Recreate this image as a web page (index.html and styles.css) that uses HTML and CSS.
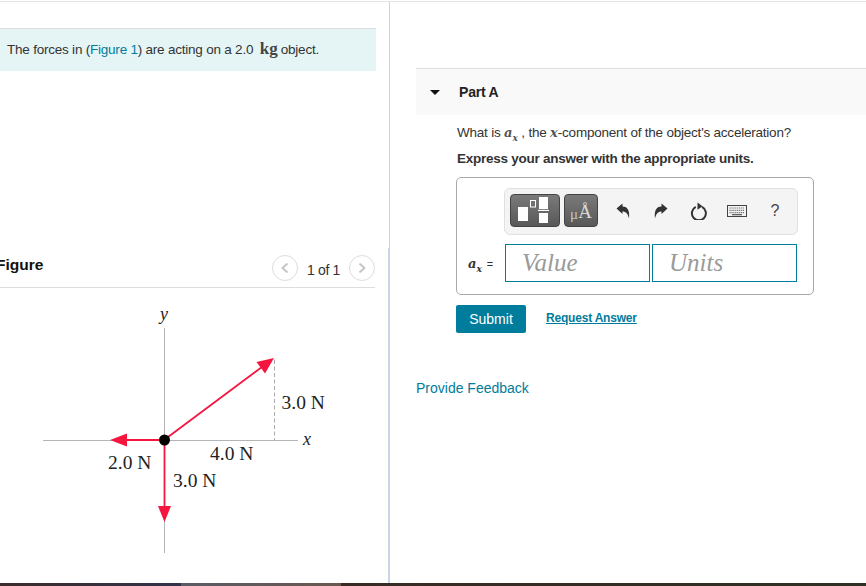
FILE: index.html
```html
<!DOCTYPE html>
<html lang="en">
<head>
  <meta charset="UTF-8" />
  <title>Part A</title>
  <link rel="stylesheet" href="styles.css">
</head>
<body>
  <div class="page">
    <div class="main">
      <div class="left">
        <div class="intro">The forces in (<a href="#">Figure 1</a>) are acting on a 2.0 <span class="unit">kg</span> object.</div>
        <div class="figHead">
          <div class="figTitle">Figure</div>
          <div class="pager">
            <span class="pageBtn">
              <svg width="10" height="12" viewBox="0 0 10 12"><path d="M7.5 1.5 L2.5 6 L7.5 10.5" fill="none" stroke="#c4c4c4" stroke-width="1.8"/></svg>
            </span>
            <span class="pageText">1 of 1</span>
            <span class="pageBtn">
              <svg width="10" height="12" viewBox="0 0 10 12"><path d="M2.5 1.5 L7.5 6 L2.5 10.5" fill="none" stroke="#c4c4c4" stroke-width="1.8"/></svg>
            </span>
          </div>
        </div>
        <svg class="diagram" width="376" height="270" viewBox="0 288 376 270">
          <line x1="164.5" y1="328" x2="164.5" y2="553" stroke="#b5b5b5"/>
          <line x1="43" y1="440.5" x2="298" y2="440.5" stroke="#b5b5b5"/>
          <line x1="274.5" y1="360" x2="274.5" y2="440" stroke="#aaa" stroke-dasharray="4 2.5"/>
          <line x1="164" y1="440" x2="262" y2="367" stroke="#f4163f" stroke-width="1.8"/>
          <polygon points="274,358 256.5,362 265,373.5" fill="#f4163f"/>
          <line x1="164" y1="440" x2="125" y2="440" stroke="#f4163f" stroke-width="1.8"/>
          <polygon points="110,440 127,433.5 127,446.5" fill="#f4163f"/>
          <line x1="164.5" y1="440" x2="164.5" y2="508" stroke="#f4163f" stroke-width="1.8"/>
          <polygon points="164.5,522 158,506 171,506" fill="#f4163f"/>
          <circle cx="164.5" cy="440" r="5.5" fill="#000"/>
          <text class="axisLabel" x="160" y="320">y</text>
          <text class="axisLabel" x="303" y="445">x</text>
          <text class="forceLabel" x="281.5" y="409">3.0 N</text>
          <text class="forceLabel" x="210" y="460">4.0 N</text>
          <text class="forceLabel" x="108" y="469">2.0 N</text>
          <text class="forceLabel" x="173" y="487">3.0 N</text>
        </svg>
      </div>

      <div class="right">
        <div class="partHead">
          <span class="caret"></span>
          <span class="partTitle">Part A</span>
        </div>
        <div class="partBody">
          <p class="question">What is <span class="math">a<sub>x</sub></span> , the <span class="math">x</span>-component of the object's acceleration?</p>
          <p class="hint">Express your answer with the appropriate units.</p>
          <div class="answerBox">
            <div class="toolbar">
              <span class="toolBtn tplBtn">
                <svg width="42" height="27" viewBox="0 0 42 27">
                  <rect x="4" y="10" width="10" height="14" fill="#fff"/>
                  <rect x="16.5" y="3.5" width="5" height="6.5" fill="none" stroke="#fff"/>
                  <rect x="25" y="0" width="9" height="12" fill="#fff"/>
                  <rect x="24" y="12.8" width="11" height="1.2" fill="#fff"/>
                  <rect x="25" y="16" width="9" height="10" fill="#fff"/>
                </svg>
              </span>
              <span class="toolBtn unitBtn"><span class="mu">μ</span>Å</span>
              <span class="toolIcons">
                <span class="toolIcon">
                  <svg width="14" height="16" viewBox="0 0 14 16"><path d="M0.5 5.5 L6.5 0.5 V3.5 C11 3.5 14 6.5 13 15.5 C12 11 10 8.5 6.5 8.5 V11 Z" fill="#333"/></svg>
                </span>
                <span class="toolIcon">
                  <svg width="14" height="16" viewBox="0 0 14 16"><path d="M13.5 5.5 L7.5 0.5 V3.5 C3 3.5 0 6.5 1 15.5 C2 11 4 8.5 7.5 8.5 V11 Z" fill="#333"/></svg>
                </span>
                <span class="toolIcon">
                  <svg width="18" height="18" viewBox="0 0 18 18"><path d="M5.8 4.9 A7 7 0 1 0 12 4.9" fill="none" stroke="#333" stroke-width="2"/><path d="M7.5 0.5 L12.5 4.2 L7.5 7.8 Z" fill="#333"/></svg>
                </span>
                <span class="toolIcon">
                  <svg width="20" height="12" viewBox="0 0 20 12">
                    <rect x="0.5" y="0.5" width="19" height="11" fill="#f2f2f2" stroke="#444"/>
                    <path d="M2.5 3 H17.5 M2.5 5.3 H17.5 M2.5 7.6 H17.5" stroke="#777" stroke-width="1.2" stroke-dasharray="1.2 .7"/>
                    <path d="M5 9.7 H15" stroke="#555" stroke-width="1.2"/>
                  </svg>
                </span>
                <span class="toolIcon helpIcon">?</span>
              </span>
            </div>
            <div class="answerRow">
              <span class="answerLabel"><span class="math">a<sub>x</sub></span> =</span>
              <span class="field">Value</span>
              <span class="field">Units</span>
            </div>
          </div>
          <div class="actions">
            <button class="submit">Submit</button>
            <a class="request" href="#">Request Answer</a>
          </div>
        </div>
        <a class="feedback" href="#">Provide Feedback</a>
      </div>
    </div>
    <div class="strip">
      <span class="stripA"></span>
      <span class="stripB"></span>
      <span class="stripC"></span>
    </div>
  </div>
</body>
</html>
```

FILE: styles.css
```css
html, body {
  margin: 0;
  padding: 0;
  background: #fff;
  overflow: hidden;
}
body {
  font-family: "Liberation Sans", Arial, sans-serif;
  font-size: 14px;
  color: #333;
}
a {
  color: #007c9c;
  text-decoration: none;
}
.page {
  width: 866px;
  height: 586px;
  display: flex;
  flex-direction: column;
  box-sizing: border-box;
  padding-top: 1px;
}
.main {
  flex: 1;
  display: flex;
  border-top: 1px solid #e4e4e4;
  min-height: 0;
}
.left {
  width: 389px;
  border-right: 1px solid #c9d5e4;
  padding-top: 26px;
  background: linear-gradient(#c9d5e4, #c9d5e4) no-repeat right bottom / 1px 335px;
}
.intro {
  width: 369px;
  height: 42px;
  line-height: 39px;
  padding-left: 7px;
  background: #e5f5f6;
  border-top: 1px solid #dcdcdc;
  font-size: 13.5px;
  letter-spacing: -0.22px;
  white-space: nowrap;
}
.unit {
  font-family: "Liberation Serif", serif;
  font-size: 17px;
  font-weight: bold;
  margin: 0 -0.5px 0 3px;
  letter-spacing: 0;
  color: #444;
}
.figHead {
  width: 375px;
  height: 39px;
  margin-top: 177px;
  border-bottom: 1px solid #ddd;
  display: flex;
  justify-content: space-between;
  align-items: flex-start;
}
.figTitle {
  font-size: 15.5px;
  font-weight: bold;
  color: #111;
  margin-left: -4px;
  line-height: 34px;
}
.pager {
  display: flex;
  align-items: center;
  gap: 10px;
  height: 38px;
  margin-top: 1px;
}
.pageBtn {
  width: 24px;
  height: 24px;
  border: 1px solid #ddd;
  border-radius: 50%;
  display: flex;
  align-items: center;
  justify-content: center;
}
.pageText {
  font-size: 14px;
  letter-spacing: -0.35px;
  margin: 4px -1px 0;
}
.diagram {
  display: block;
}
.forceLabel {
  font-family: "Liberation Serif", serif;
  font-size: 19.5px;
  fill: #222;
}
.axisLabel {
  font-family: "Liberation Serif", serif;
  font-style: italic;
  font-size: 18px;
  fill: #222;
}
.right {
  flex: 1;
  padding: 66px 0 0 26px;
}
.partHead {
  height: 46px;
  background: #f9f9f9;
  border-top: 1px solid #ddd;
  display: flex;
  align-items: center;
}
.caret {
  width: 0;
  height: 0;
  margin-left: 14px;
  border-left: 5.5px solid transparent;
  border-right: 5.5px solid transparent;
  border-top: 5.5px solid #111;
}
.partTitle {
  margin-left: 19px;
  font-size: 14px;
  font-weight: bold;
  letter-spacing: -0.2px;
  color: #222;
}
.partBody {
  padding-left: 40px;
  width: 358px;
}
.question {
  margin: 9px 0 0 1px;
  line-height: 17px;
  font-size: 13.5px;
  letter-spacing: -0.22px;
  white-space: nowrap;
}
.hint {
  margin: 9px 0 0 1px;
  line-height: 17px;
  font-size: 13.5px;
  font-weight: bold;
  letter-spacing: -0.25px;
  white-space: nowrap;
}
.math {
  font-family: "DejaVu Serif", serif;
  font-style: italic;
  font-weight: 600;
  font-size: 13px;
  color: #555;
  letter-spacing: 0;
}
.math sub {
  font-size: 9px;
  line-height: 0;
}
.answerBox {
  margin-top: 10px;
  height: 116px;
  border: 1px solid #aaa;
  border-radius: 5px;
}
.toolbar {
  width: 294px;
  height: 47px;
  margin: 10px 0 0 47px;
  padding: 5px 0 1px 5px;
  background: #f4f4f4;
  border: 1px solid #e0e0e0;
  border-radius: 6px;
  display: flex;
  align-items: flex-start;
  box-sizing: border-box;
}
.toolBtn {
  height: 33px;
  box-sizing: border-box;
  border: 1px solid #444;
  border-radius: 4px;
  background: linear-gradient(#7a7a7a, #585858);
  display: flex;
  align-items: center;
  justify-content: center;
}
.tplBtn {
  width: 50px;
  margin-right: 4px;
}
.unitBtn {
  width: 34px;
  color: #d8d8d8;
  font-family: "Liberation Serif", serif;
  font-size: 19px;
  align-items: flex-end;
  padding-bottom: 3px;
}
.mu {
  font-size: 15px;
  color: #c4c4c4;
}
.toolIcons {
  display: flex;
  align-items: center;
  height: 33px;
  margin-left: 6px;
}
.toolIcon {
  width: 38px;
  display: flex;
  align-items: center;
  justify-content: center;
}
.helpIcon {
  font-size: 16px;
  color: #444;
}
.answerRow {
  display: flex;
  align-items: center;
  margin-top: 9px;
  margin-left: 11px;
}
.answerLabel {
  width: 37px;
  font-size: 11px;
  white-space: nowrap;
}
.answerLabel .math {
  color: #333;
  margin-right: 2px;
}
.field {
  width: 145px;
  height: 38px;
  box-sizing: border-box;
  margin-right: 2px;
  border: 1px solid #007c9c;
  padding-left: 16px;
  line-height: 36px;
  font-family: "Liberation Serif", serif;
  font-style: italic;
  font-size: 25px;
  color: #9a9a9a;
}
.actions {
  margin-top: 10px;
  display: flex;
  align-items: center;
}
.submit {
  width: 70px;
  height: 28px;
  border: none;
  border-radius: 2px;
  background: #007c9c;
  color: #fff;
  font-family: "Liberation Sans", Arial, sans-serif;
  font-size: 14px;
  padding: 0;
}
.request {
  margin-left: 20px;
  margin-top: -3px;
  font-size: 12px;
  font-weight: bold;
  letter-spacing: -0.2px;
  text-decoration: underline;
}
.feedback {
  display: block;
  margin-top: 47px;
  font-size: 14px;
}
.strip {
  height: 3px;
  display: flex;
}
.stripA {
  width: 181px;
  background: linear-gradient(90deg, #3c2c2c, #33324a);
}
.stripB {
  width: 160px;
  background: linear-gradient(90deg, #5b5b66, #6a5850);
}
.stripC {
  flex: 1;
  background: linear-gradient(90deg, #3a2a26, #2f2f24);
}
```
